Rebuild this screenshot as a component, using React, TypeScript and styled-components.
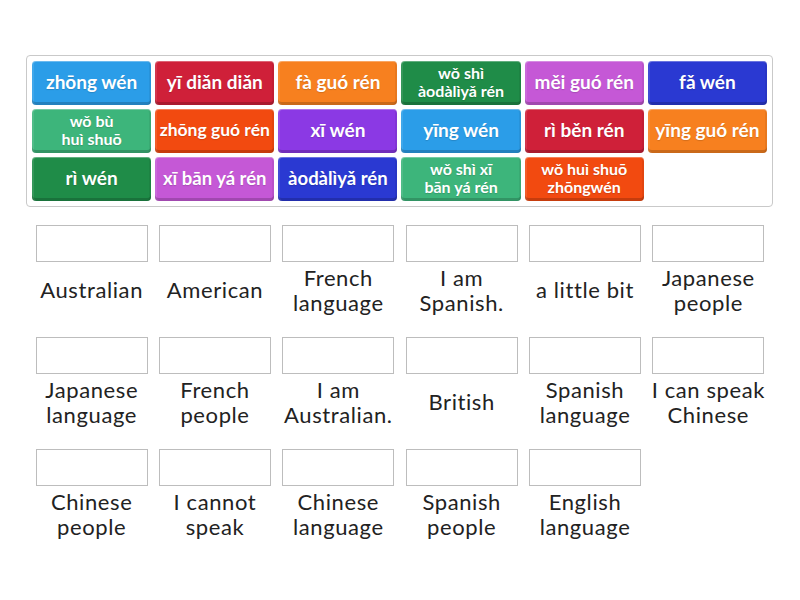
import React from 'react'
import styled, { createGlobalStyle } from 'styled-components'

const GlobalStyle = createGlobalStyle`
  body {
    margin: 0;
    background: #ffffff;
    font-family: Lato, "Liberation Sans", sans-serif;
  }
`

const Page = styled.div`
  padding-top: 55px;
  width: 800px;
`

const Board = styled.div`
  margin-left: 26px;
  width: 747px;
  box-sizing: border-box;
  border: 1px solid #c9c9c9;
  border-radius: 4px;
  padding: 5px;
  display: grid;
  grid-template-columns: repeat(6, 1fr);
  grid-auto-rows: 44px;
  gap: 4px;
`

const Tile = styled.div<{ $bg: string; $size: number }>`
  background: ${p => p.$bg};
  border-radius: 4px;
  color: #fff;
  display: flex;
  align-items: center;
  justify-content: center;
  text-align: center;
  font-weight: 700;
  font-size: ${p => p.$size}px;
  line-height: ${p => (p.$size < 17 ? '18px' : '22px')};
  padding-bottom: 2px;
  box-sizing: border-box;
  white-space: nowrap;
  box-shadow: inset 0 -3px 0 rgba(0, 0, 0, 0.18), inset 0 1px 0 rgba(255, 255, 255, 0.3),
    inset 2px 0 0 rgba(255, 255, 255, 0.1), inset -2px 0 0 rgba(0, 0, 0, 0.06);
  text-shadow: 0 1px 1px rgba(0, 0, 0, 0.15);
`

const Answers = styled.div`
  margin: 18px 0 0 30px;
  width: 740px;
  display: grid;
  grid-template-columns: repeat(6, 1fr);
  row-gap: 17px;
`

const Cell = styled.div`
  display: flex;
  flex-direction: column;
  align-items: center;
`

const Slot = styled.div`
  width: 112px;
  height: 37px;
  box-sizing: border-box;
  border: 1px solid #bdbdbd;
  background: #fff;
`

const Label = styled.div`
  height: 58px;
  padding-bottom: 3px;
  box-sizing: border-box;
  display: flex;
  align-items: center;
  justify-content: center;
  text-align: center;
  font-size: 22px;
  letter-spacing: 0.6px;
  line-height: 25px;
  color: #222;
  white-space: nowrap;
`

const C = {
  blue: '#2b9de8',
  red: '#cf2039',
  orange: '#f7801f',
  dgreen: '#1f8c48',
  violet: '#c558d6',
  navy: '#2a39d2',
  teal: '#3db57b',
  redorange: '#f24a10',
  purple: '#8b39e4',
}

const tiles: { t: string[]; bg: string; size: number }[] = [
  { t: ['zhōng wén'], bg: C.blue, size: 19 },
  { t: ['yī diǎn diǎn'], bg: C.red, size: 19 },
  { t: ['fà guó rén'], bg: C.orange, size: 19 },
  { t: ['wǒ shì', 'àodàlìyǎ rén'], bg: C.dgreen, size: 16 },
  { t: ['měi guó rén'], bg: C.violet, size: 19 },
  { t: ['fǎ wén'], bg: C.navy, size: 19 },
  { t: ['wǒ bù', 'huì shuō'], bg: C.teal, size: 16 },
  { t: ['zhōng guó rén'], bg: C.redorange, size: 17.5 },
  { t: ['xī wén'], bg: C.purple, size: 19 },
  { t: ['yīng wén'], bg: C.blue, size: 19 },
  { t: ['rì běn rén'], bg: C.red, size: 19 },
  { t: ['yīng guó rén'], bg: C.orange, size: 19 },
  { t: ['rì wén'], bg: C.dgreen, size: 19 },
  { t: ['xī bān yá rén'], bg: C.violet, size: 18.5 },
  { t: ['àodàlìyǎ rén'], bg: C.navy, size: 18.5 },
  { t: ['wǒ shì xī', 'bān yá rén'], bg: C.teal, size: 16 },
  { t: ['wǒ huì shuō', 'zhōngwén'], bg: C.redorange, size: 16 },
]

const labels: string[][] = [
  ['Australian'],
  ['American'],
  ['French', 'language'],
  ['I am', 'Spanish.'],
  ['a little bit'],
  ['Japanese', 'people'],
  ['Japanese', 'language'],
  ['French', 'people'],
  ['I am', 'Australian.'],
  ['British'],
  ['Spanish', 'language'],
  ['I can speak', 'Chinese'],
  ['Chinese', 'people'],
  ['I cannot', 'speak'],
  ['Chinese', 'language'],
  ['Spanish', 'people'],
  ['English', 'language'],
]

function Lines({ lines }: { lines: string[] }) {
  return (
    <div>
      {lines.map((l, i) => (
        <div key={i}>{l}</div>
      ))}
    </div>
  )
}

export default function App() {
  return (
    <Page>
      <GlobalStyle />
      <Board>
        {tiles.map((tile, i) => (
          <Tile key={i} $bg={tile.bg} $size={tile.size}>
            <Lines lines={tile.t} />
          </Tile>
        ))}
      </Board>
      <Answers>
        {labels.map((l, i) => (
          <Cell key={i}>
            <Slot />
            <Label>
              <Lines lines={l} />
            </Label>
          </Cell>
        ))}
      </Answers>
    </Page>
  )
}
